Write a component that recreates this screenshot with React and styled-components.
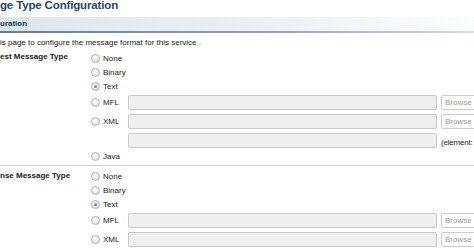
import React from 'react'
import styled, { createGlobalStyle } from 'styled-components'

const Global = createGlobalStyle`
  html, body {
    margin: 0;
    padding: 0;
    background: #ffffff;
    overflow: hidden;
  }
  body {
    font-family: "Liberation Sans", Arial, sans-serif;
    font-size: 8px;
    color: #1a1a1a;
  }
`

const Page = styled.div`
  width: 474px;
  height: 249px;
  overflow: hidden;
  display: flex;
  flex-direction: column;
`

const Title = styled.h1`
  margin: 0;
  height: 16px;
  line-height: 13px;
  font-size: 11.5px;
  letter-spacing: -0.15px;
  font-weight: 700;
  color: #2a4563;
  white-space: nowrap;
  margin-top: -1px;
`

const SectionBar = styled.div`
  height: 15px;
  margin-top: 3px;
  display: flex;
  align-items: center;
  font-size: 8px;
  font-weight: 700;
  color: #23405f;
  background: linear-gradient(to right, #dde5ee 0%, #e8eef4 45%, #fbfcfd 100%);
  border-bottom: 2px solid;
  border-image: linear-gradient(to right, #6c7a88, #9aa6b1 60%, #d8dde2) 1;
`

const Intro = styled.p`
  margin: 0;
  padding-top: 4px;
  height: 14px;
  line-height: 12px;
  font-size: 8px;
  white-space: nowrap;
`

const Group = styled.section`
  display: flex;
  padding-bottom: ${p => p.$pb || 0}px;
  border-bottom: ${p => (p.$line ? '1px solid #cfcfcf' : 'none')};
`

const GroupLabel = styled.div`
  width: 91px;
  flex: none;
  font-weight: 700;
  font-size: 8px;
  line-height: 14px;
  padding-top: ${p => p.$pt || 0}px;
  white-space: nowrap;
`

const Options = styled.div`
  flex: 1;
  display: flex;
  flex-direction: column;
  padding-top: ${p => p.$pt || 0}px;
`

const Row = styled.div`
  display: flex;
  align-items: center;
  height: ${p => (p.$field ? 19 : p.$h || 14)}px;
`

const Choice = styled.label`
  width: 37px;
  flex: none;
  display: flex;
  align-items: center;
  gap: 3px;
  font-size: 8px;
  color: #222;
  white-space: nowrap;
`

const Radio = styled.span`
  width: 7px;
  height: 7px;
  border-radius: 50%;
  border: 1px solid #b0b0b0;
  background: radial-gradient(circle at 40% 35%, #ffffff 0%, #e8e8e8 60%, #d2d2d2 100%);
  display: flex;
  align-items: center;
  justify-content: center;
  flex: none;

  &::after {
    content: '';
    width: 3px;
    height: 3px;
    border-radius: 50%;
    background: ${p => (p.$on ? 'radial-gradient(circle at 40% 35%, #7fb0e6, #2a62a8)' : 'transparent')};
  }
`

const Field = styled.div`
  width: 307px;
  height: 13px;
  flex: none;
  border: 1px solid #c9c9c9;
  border-radius: 2px;
  background: #efefef;
`

const Browse = styled.button`
  margin-left: 4px;
  height: 15px;
  width: 48px;
  flex: none;
  padding: 0 0 0 3px;
  text-align: left;
  font-family: "Liberation Sans", Arial, sans-serif;
  font-size: 8px;
  color: #9b9b9b;
  background: #ffffff;
  border: 1px solid #cdcdcd;
  border-radius: 2px;
`

const Hint = styled.span`
  margin-left: 4px;
  font-size: 8px;
  letter-spacing: -0.2px;
  color: #222;
  white-space: nowrap;
  padding-top: 3px;
`

function Option({ label, on, children }) {
  return (
    <Row $field={!!children || label === ''}>
      {label !== '' ? (
        <Choice>
          <Radio $on={on} />
          {label}
        </Choice>
      ) : (
        <Choice />
      )}
      {children}
    </Row>
  )
}

function FileRow({ label }) {
  return (
    <Option label={label}>
      <Field />
      <Browse>Browse</Browse>
    </Option>
  )
}

export default function App() {
  return (
    <Page>
      <Global />
      <Title>ge Type Configuration</Title>
      <SectionBar>uration</SectionBar>
      <Intro>is page to configure the message format for this service .</Intro>

      <Group $line $pb={2}>
        <GroupLabel $pt={0}>est Message Type</GroupLabel>
        <Options $pt={1}>
          <Option label="None" />
          <Option label="Binary" />
          <Option label="Text" on />
          <FileRow label="MFL" />
          <FileRow label="XML" />
          <Option label="">
            <Field />
            <Hint>(element:</Hint>
          </Option>
          <Row $h={13}>
            <Choice>
              <Radio />
              Java
            </Choice>
          </Row>
        </Options>
      </Group>

      <Group>
        <GroupLabel $pt={3}>nse Message Type</GroupLabel>
        <Options $pt={3}>
          <Option label="None" />
          <Option label="Binary" />
          <Option label="Text" on />
          <FileRow label="MFL" />
          <FileRow label="XML" />
        </Options>
      </Group>
    </Page>
  )
}
